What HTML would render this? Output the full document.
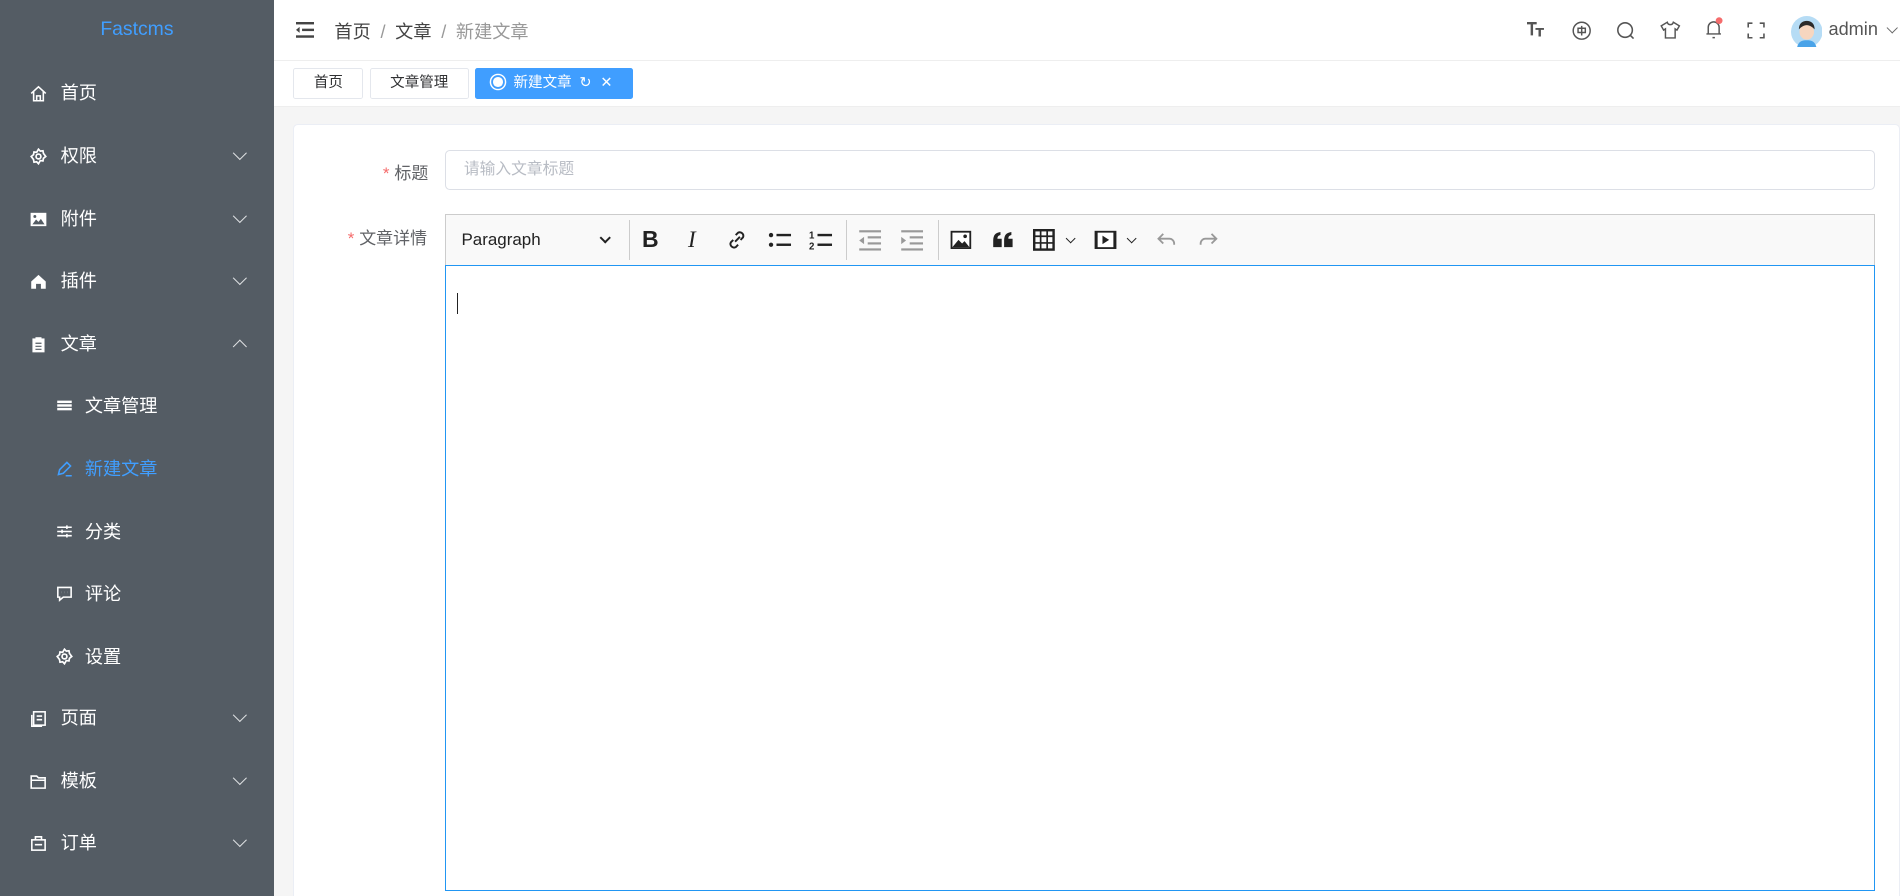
<!DOCTYPE html>
<html><head><meta charset="utf-8"><style>
*{box-sizing:border-box;margin:0;padding:0}
html,body{width:1900px;height:896px;overflow:hidden;background:#fff}
#w{zoom:1.21173;width:1568px;height:740px;position:relative;font-family:"Liberation Sans","Noto Sans CJK SC",sans-serif;overflow:hidden}
.side{position:absolute;left:0;top:0;width:226px;height:740px;background:#545c64;color:#fff}
.logo{position:absolute;top:15px;width:100%;text-align:center;color:#409eff;font-size:16px}
.mi{position:absolute;left:0;width:226px;height:20px;font-size:15px;line-height:20px}
.mi .ic{position:absolute;left:25px;top:3px;width:14px;height:14px}
.mi .t{position:absolute;left:50px}
.mi.sub .ic{left:46px}.mi.sub .t{left:70px}
.mi .ch{position:absolute;left:194px;top:3px;width:8px;height:8px;border-right:1.3px solid #dfe1e3;border-bottom:1.3px solid #dfe1e3;transform:rotate(45deg)}
.mi .ch.up{transform:rotate(-135deg);top:8px}
.hdr{position:absolute;left:226px;top:0;right:0;height:50px;border-bottom:1px solid #eee}
.bc{position:absolute;left:50px;top:15px;font-size:15px;color:#444}
.bc span.s{color:#999;margin:0 8px}
.tabs{position:absolute;left:226px;top:51px;right:0;height:37px;border-bottom:1px solid #eee}
.tab{position:absolute;top:5px;height:26px;border:1px solid #e4e7ed;border-radius:2px;font-size:12px;line-height:24px;text-align:center;color:#303133}
.main{position:absolute;left:226px;top:88px;right:0;bottom:0;background:#f5f5f5}
.card{position:absolute;left:16px;top:14px;right:0;bottom:-5px;background:#fff;border:1px solid #ebeef5;border-radius:4px}
.lbl{position:absolute;font-size:14px;color:#606266}
.lbl b{color:#f56c6c;font-weight:normal;margin-right:4px}
.inp{position:absolute;left:367px;top:124px;width:1180px;height:33px;border:1px solid #dcdfe6;border-radius:4px;font-size:13px;color:#b8bcc4;line-height:31px;padding-left:15px}
.tb{position:absolute;left:367px;top:177px;width:1180px;height:42px;border:1px solid #ccc;border-bottom:none;background:#f9f9f9}
.ed{position:absolute;left:367px;top:219px;width:1180px;height:516px;border:1px solid #2196f3;background:#fff}
.tb svg{position:absolute;top:11px}
.sep{position:absolute;top:4px;width:1px;height:33px;background:#ccc}
.hi{position:absolute;top:17px}
</style></head><body><div id="w">
<div class="side">
<div class="logo">Fastcms</div>
<div class="mi" style="top:67px"><svg class="ic" viewBox="0 0 14 14" fill="none" stroke="#fff" stroke-width="1.3"><path d="M1 7L7 1.5 13 7M3 5.5V13h8V5.5M5.5 13V9h3v4"/></svg><span class="t">首页</span></div>
<div class="mi" style="top:119px"><svg class="ic" viewBox="0 0 14 14" fill="none" stroke="#fff" stroke-width="1.4"><circle cx="7" cy="7" r="2"/><path d="M7 1l1.5 1.6 2.2-.3.4 2.2L13 7l-1.9 1.5-.4 2.2-2.2-.3L7 13l-1.5-1.6-2.2.3-.4-2.2L1 7l1.9-1.5.4-2.2 2.2.3z"/></svg><span class="t">权限</span><i class="ch"></i></div>
<div class="mi" style="top:171px"><svg class="ic" viewBox="0 0 14 14"><rect x="0.5" y="1.5" width="13" height="11" fill="#fff"/><path d="M2 11l3-4 2 2 2-2.5 3 4.5z" fill="#545c64"/><circle cx="4" cy="4.5" r="1.2" fill="#545c64"/></svg><span class="t">附件</span><i class="ch"></i></div>
<div class="mi" style="top:222px"><svg class="ic" viewBox="0 0 14 14"><path d="M1 7L7 1.5 13 7V13H9V9H5v4H1z" fill="#fff"/></svg><span class="t">插件</span><i class="ch"></i></div>
<div class="mi" style="top:274px"><svg class="ic" viewBox="0 0 14 14"><rect x="2" y="2" width="10" height="11.5" fill="#fff"/><rect x="4.5" y="1" width="5" height="2" fill="#fff"/><path d="M4.5 6h5M4.5 8.5h5M4.5 11h5" stroke="#545c64" stroke-width="1"/></svg><span class="t">文章</span><i class="ch up"></i></div>
<div class="mi sub" style="top:325px"><svg class="ic" viewBox="0 0 14 14" fill="#fff"><rect x="1" y="3" width="12" height="2"/><rect x="1" y="6" width="12" height="2"/><rect x="1" y="9" width="12" height="2"/></svg><span class="t">文章管理</span></div>
<div class="mi sub" style="top:377px;color:#409eff"><svg class="ic" viewBox="0 0 14 14" fill="none" stroke="#409eff" stroke-width="1.3"><path d="M2 12l1-4 6-6 3 3-6 6zM8 13h5"/></svg><span class="t">新建文章</span></div>
<div class="mi sub" style="top:429px"><svg class="ic" viewBox="0 0 14 14" fill="none" stroke="#fff" stroke-width="1.3"><path d="M1 3.5h12M1 7h12M1 10.5h12"/><path d="M9 2v3M5 5.5v3M9 9v3"/></svg><span class="t">分类</span></div>
<div class="mi sub" style="top:480px"><svg class="ic" viewBox="0 0 14 14" fill="none" stroke="#fff" stroke-width="1.3"><path d="M1.5 2h11v8H6l-3 2.5V10H1.5z"/><path d="M4.5 6h.1M7 6h.1M9.5 6h.1" stroke-width="1.6"/></svg><span class="t">评论</span></div>
<div class="mi sub" style="top:532px"><svg class="ic" viewBox="0 0 14 14" fill="none" stroke="#fff" stroke-width="1.4"><circle cx="7" cy="7" r="2"/><path d="M7 1l1.5 1.6 2.2-.3.4 2.2L13 7l-1.9 1.5-.4 2.2-2.2-.3L7 13l-1.5-1.6-2.2.3-.4-2.2L1 7l1.9-1.5.4-2.2 2.2.3z"/></svg><span class="t">设置</span></div>
<div class="mi" style="top:583px"><svg class="ic" viewBox="0 0 14 14" fill="none" stroke="#fff" stroke-width="1.3"><rect x="3" y="1.5" width="9.5" height="11"/><path d="M1.5 4v9.5H10M5.5 5h4.5M5.5 8h4.5"/></svg><span class="t">页面</span><i class="ch"></i></div>
<div class="mi" style="top:635px"><svg class="ic" viewBox="0 0 14 14" fill="none" stroke="#fff" stroke-width="1.3"><path d="M1 2.5h4.5l1.5 1.5h5.5v8.5H1z M1 6h11.5"/></svg><span class="t">模板</span><i class="ch"></i></div>
<div class="mi" style="top:686px"><svg class="ic" viewBox="0 0 14 14" fill="none" stroke="#fff" stroke-width="1.3"><rect x="1.5" y="4" width="11" height="8.5"/><path d="M4.5 4V1.5h5V4M4 8h6"/></svg><span class="t">订单</span><i class="ch"></i></div>
</div>
<div class="hdr">
<svg style="position:absolute;left:18px;top:18px" width="15" height="13" viewBox="0 0 15 13" fill="#444"><rect y="0" width="15" height="2"/><rect x="5" y="5.5" width="10" height="2"/><rect y="11" width="15" height="2"/><path d="M0 6.5l3-2.5v5z"/></svg>
<div class="bc">首页<span class="s">/</span>文章<span class="s">/</span><span style="color:#999">新建文章</span></div>
<svg class="hi" style="left:1034px;top:18px" width="14" height="13" viewBox="0 0 14 13" fill="#555"><path d="M0 0h8v2H5v9H3V2H0zM7 5h7v1.5h-2.5V12H9.5V6.5H7z"/></svg>
<svg class="hi" style="left:1071px;top:17px" width="16" height="16" viewBox="0 0 16 16" fill="none" stroke="#555" stroke-width="1.2"><circle cx="8" cy="8" r="7"/><path d="M5 6h6v3.5H5zM8 4v8"/></svg>
<svg class="hi" style="left:1108px;top:17px" width="16" height="16" viewBox="0 0 16 16" fill="none" stroke="#555" stroke-width="1.3"><circle cx="7.5" cy="7.5" r="6"/><path d="M12 12l2.5 2.5"/></svg>
<svg class="hi" style="left:1144px;top:17px" width="17" height="15" viewBox="0 0 17 15" fill="none" stroke="#555" stroke-width="1.2"><path d="M6 1L1 4l2 3.5 1.5-1V14h8V6.5l1.5 1L16 4l-5-3c-.5 1.5-1.5 2-2.5 2S6.5 2.5 6 1z"/></svg>
<svg class="hi" style="left:1180px;top:14px" width="16" height="19" viewBox="0 0 16 19" fill="none" stroke="#555" stroke-width="1.2"><path d="M2 14h12M3.5 14V8.5a4.5 4.5 0 019 0V14M7 17h2"/><circle cx="12.5" cy="3" r="2.8" fill="#f56c6c" stroke="none"/></svg>
<svg class="hi" style="left:1216px;top:18px" width="15" height="14" viewBox="0 0 15 14" fill="none" stroke="#555" stroke-width="1.3"><path d="M1 4.5V1h3.5M10.5 1H14v3.5M14 9.5V13h-3.5M4.5 13H1V9.5"/></svg>
<svg style="position:absolute;left:1252px;top:13px" width="26" height="26" viewBox="0 0 26 26"><circle cx="13" cy="13" r="13" fill="#b6dcf5"/><path d="M5 26c1-5 4-6 8-6s7 1 8 6z" fill="#4aa3e8"/><ellipse cx="13" cy="13" rx="6" ry="6.5" fill="#f7d6bf"/><path d="M6.5 11c0-5 3-7 6.5-7s6.5 2 6.5 7c-2-2-4-3.5-6.5-3.5S8.5 9 6.5 11z" fill="#2b2b2b"/></svg>
<div style="position:absolute;left:1283px;top:16px;font-size:15px;color:#555">admin</div>
<i style="position:absolute;left:1332px;top:20px;width:7px;height:7px;border-right:1.2px solid #666;border-bottom:1.2px solid #666;transform:rotate(45deg)"></i>
</div>
<div class="tabs">
<div class="tab" style="left:16px;width:58px">首页</div>
<div class="tab" style="left:79px;width:82px">文章管理</div>
<div class="tab" style="left:166px;width:130px;background:#409eff;border-color:#409eff;color:#fff;text-align:left;padding-left:14px"><span style="display:inline-block;width:8px;height:8px;border-radius:50%;background:#fff;box-shadow:0 0 0 1.5px #409eff,0 0 0 2.7px #fff;margin-right:9px;vertical-align:0"></span>新建文章 <span style="margin-left:3px">↻</span> <span style="margin-left:4px">✕</span></div>
</div>
<div class="main"><div class="card"></div></div>
<div class="lbl" style="left:316px;top:131px"><b>*</b>标题</div>
<div class="inp">请输入文章标题</div>
<div class="lbl" style="left:287px;top:185px"><b>*</b>文章详情</div>
<div class="tb">
<div style="position:absolute;left:13px;top:12px;font-size:14px;color:#222">Paragraph</div>
<i style="position:absolute;left:128px;top:15px;width:7px;height:7px;border-right:1.8px solid #222;border-bottom:1.8px solid #222;transform:rotate(45deg)"></i>
<div class="sep" style="left:151px"></div>
<div style="position:absolute;left:162px;top:9px;font:bold 19px 'Liberation Sans';color:#222">B</div>
<div style="position:absolute;left:200px;top:9px;font:italic 19px 'Liberation Serif';color:#222">I</div>
<svg style="left:231px" width="18" height="18" viewBox="0 0 18 18" fill="none" stroke="#222" stroke-width="1.6"><path d="M7.5 10.5l4-4M8 5l2-2a3 3 0 014 4l-2 2M10 13l-2 2a3 3 0 01-4-4l2-2"/></svg>
<svg style="left:266px" width="20" height="18" viewBox="0 0 20 18" fill="#222"><circle cx="2.5" cy="5" r="1.8"/><circle cx="2.5" cy="13" r="1.8"/><rect x="7" y="4" width="12" height="2"/><rect x="7" y="12" width="12" height="2"/></svg>
<svg style="left:300px" width="20" height="18" viewBox="0 0 20 18" fill="#222"><text x="0" y="8" font-size="8" font-family="Liberation Sans" font-weight="bold">1</text><text x="0" y="17" font-size="8" font-family="Liberation Sans" font-weight="bold">2</text><rect x="7" y="4" width="12" height="2"/><rect x="7" y="12" width="12" height="2"/></svg>
<div class="sep" style="left:330px"></div>
<svg style="left:340px" width="20" height="18" viewBox="0 0 20 18" fill="#999"><rect x="1" y="1" width="18" height="1.8"/><rect x="8" y="6" width="11" height="1.8"/><rect x="8" y="11" width="11" height="1.8"/><rect x="1" y="16" width="18" height="1.8"/><path d="M1 9.5l4-3v6z"/></svg>
<svg style="left:375px" width="20" height="18" viewBox="0 0 20 18" fill="#999"><rect x="1" y="1" width="18" height="1.8"/><rect x="8" y="6" width="11" height="1.8"/><rect x="8" y="11" width="11" height="1.8"/><rect x="1" y="16" width="18" height="1.8"/><path d="M5 9.5l-4-3v6z"/></svg>
<div class="sep" style="left:406px"></div>
<svg style="left:416px" width="18" height="18" viewBox="0 0 18 18"><rect x="0.5" y="1.5" width="17" height="15" fill="#222"/><rect x="2" y="3" width="14" height="12" fill="#fff"/><path d="M2 15l5-6 3 3 2-2 4 5z" fill="#222"/><circle cx="12.5" cy="6" r="1.5" fill="#222"/></svg>
<svg style="left:451px" width="18" height="18" viewBox="0 0 18 18" fill="#222"><path d="M1 9.5C1 5 3 3 7 2.5v2.5C5 5.5 4.5 6.5 4.5 8H8v7H1zM10 9.5C10 5 12 3 16 2.5v2.5c-2 .5-2.5 1.5-2.5 3H17v7h-7z"/></svg>
<svg style="left:485px" width="18" height="18" viewBox="0 0 18 18" fill="none" stroke="#222" stroke-width="1.4"><rect x="1" y="1" width="16" height="16" stroke-width="2"/><path d="M1 6h16M1 11.5h16M6.3 1v16M11.7 1v16"/></svg>
<i style="position:absolute;left:513px;top:16px;width:6px;height:6px;border-right:1.6px solid #222;border-bottom:1.6px solid #222;transform:rotate(45deg)"></i>
<svg style="left:535px" width="19" height="18" viewBox="0 0 19 18"><rect x="0.5" y="1.5" width="18" height="15" fill="#222"/><rect x="3" y="3" width="13" height="12" fill="#fff"/><path d="M7 5.5l5.5 3.5L7 12.5z" fill="#222"/></svg>
<i style="position:absolute;left:563px;top:16px;width:6px;height:6px;border-right:1.6px solid #222;border-bottom:1.6px solid #222;transform:rotate(45deg)"></i>
<svg style="left:586px" width="18" height="18" viewBox="0 0 18 18" fill="none" stroke="#999" stroke-width="1.5"><path d="M6 4L2 8l4 4M2 8h9a4 4 0 014 4v1"/></svg>
<svg style="left:620px" width="18" height="18" viewBox="0 0 18 18" fill="none" stroke="#999" stroke-width="1.5"><path d="M12 4l4 4-4 4M16 8H7a4 4 0 00-4 4v1"/></svg>
</div>
<div class="ed"><div style="position:absolute;left:9px;top:22px;width:1px;height:17px;background:#222"></div></div>
</div></body></html>
